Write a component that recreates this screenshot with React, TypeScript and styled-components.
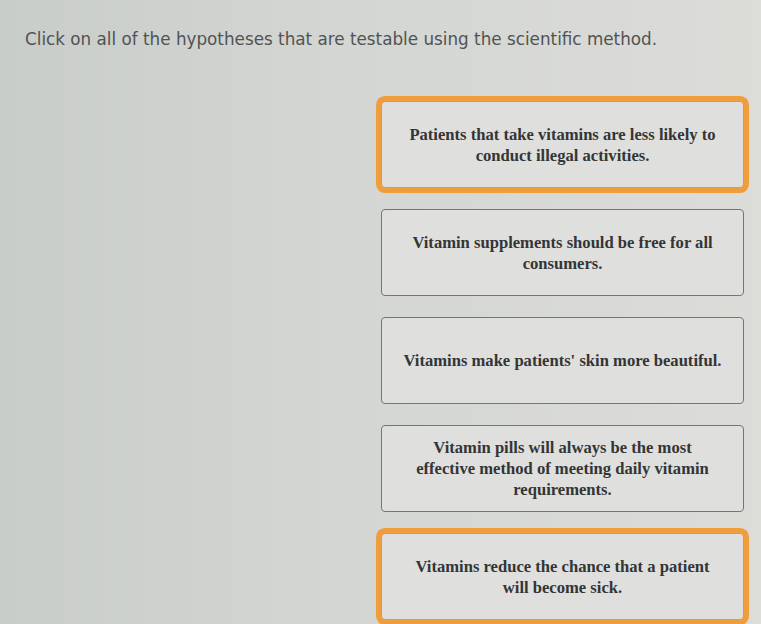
import React, { useState } from "react";
import styled, { createGlobalStyle, css } from "styled-components";

const GlobalStyle = createGlobalStyle`
  html, body {
    margin: 0;
    padding: 0;
    height: 100%;
  }
  body {
    background: linear-gradient(90deg, #c9cdca 0%, #d3d6d3 45%, #dcdcd9 100%);
    overflow: hidden;
  }
`;

const Page = styled.div`
  width: 761px;
  height: 624px;
  padding: 28px 0 0 25px;
  box-sizing: border-box;
`;

const Prompt = styled.div`
  font-family: "DejaVu Sans", "Liberation Sans", sans-serif;
  font-size: 16.8px;
  line-height: 22px;
  color: #515352;
`;

const OptionList = styled.div`
  display: flex;
  flex-direction: column;
  gap: 21px;
  width: 363px;
  margin: 51px 0 0 356px;
`;

const Option = styled.button<{ $selected?: boolean }>`
  display: flex;
  flex-direction: column;
  align-items: center;
  justify-content: center;
  min-height: 87px;
  padding: 4px 10px;
  box-sizing: border-box;
  background: #dfe0de;
  border: 1px solid #747676;
  border-radius: 4px;
  font-family: "Liberation Serif", "Times New Roman", serif;
  font-weight: bold;
  font-size: 16.6px;
  line-height: 21px;
  color: #343535;
  text-align: center;
  cursor: pointer;

  ${(p) =>
    p.$selected &&
    css`
      border-color: #e8983c;
      box-shadow: 0 0 0 5px #f09d3e;
    `}
`;

const Line = styled.span`
  white-space: nowrap;
`;

const options = [
  ["Patients that take vitamins are less likely to", "conduct illegal activities."],
  ["Vitamin supplements should be free for all", "consumers."],
  ["Vitamins make patients' skin more beautiful."],
  [
    "Vitamin pills will always be the most",
    "effective method of meeting daily vitamin",
    "requirements.",
  ],
  ["Vitamins reduce the chance that a patient", "will become sick."],
];

export default function App() {
  const [selected, setSelected] = useState<number[]>([0, 4]);

  const toggle = (i: number) =>
    setSelected((s) => (s.includes(i) ? s.filter((x) => x !== i) : [...s, i]));

  return (
    <Page>
      <GlobalStyle />
      <Prompt>
        Click on all of the hypotheses that are testable using the scientific
        method.
      </Prompt>
      <OptionList>
        {options.map((lines, i) => (
          <Option
            key={i}
            $selected={selected.includes(i)}
            onClick={() => toggle(i)}
          >
            {lines.map((l) => (
              <Line key={l}>{l}</Line>
            ))}
          </Option>
        ))}
      </OptionList>
    </Page>
  );
}
